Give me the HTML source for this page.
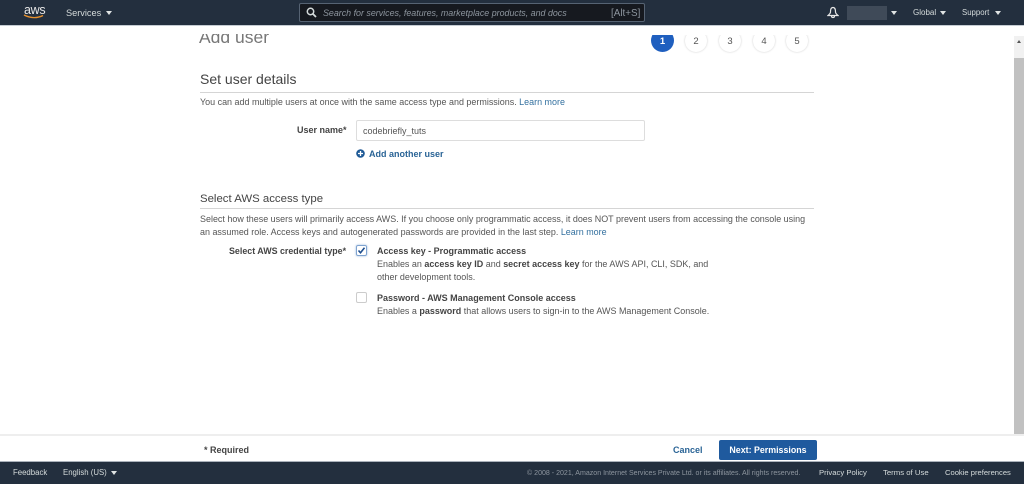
<!DOCTYPE html>
<html><head><meta charset="utf-8"><style>
html,body{margin:0;padding:0;width:1024px;height:484px;overflow:hidden;background:#fff;font-family:"Liberation Sans",sans-serif;color:#444}
#r{position:absolute;left:0;top:0;width:1024px;height:484px;filter:blur(.35px)}
.a{position:absolute;white-space:nowrap;line-height:12px}
.b{font-weight:bold}
.l{color:#33709f}
.w{color:#d5dbdb}
.tri{position:absolute;width:0;height:0;border-left:3px solid transparent;border-right:3px solid transparent;border-top:4.500px solid #e0e4e4}
.step{position:absolute;width:22px;height:22px;border-radius:50%;background:#fff;box-shadow:0 0 2px #ccc;text-align:center;font-size:9.500px;line-height:24px;color:#555}
</style></head><body><div id="r">
<div style="position:absolute;left:0;top:0;width:1024px;height:26px;background:#232f3e;border-bottom:1px solid #c5ccd3;box-sizing:border-box"></div>
<div class="a" style="left:24px;top:4px;font-size:12.500px;color:#e6e6e6;line-height:13px;letter-spacing:-.3px">aws</div>
<svg style="position:absolute;left:23px;top:14px" width="22" height="6"><path d="M1 1Q11 6 20 1.500" fill="none" stroke="#e8912d" stroke-width="1.300"/></svg>
<div class="a w" style="left:66px;top:7px;font-size:9.200px">Services</div>
<div class="tri" style="left:106px;top:10.500px"></div>
<div style="position:absolute;left:299px;top:3px;width:344px;height:17px;background:#16191f;border:1px solid #566373;border-radius:2px"></div>
<svg style="position:absolute;left:306px;top:7px" width="11" height="11" viewBox="0 0 11 11"><circle cx="4.500" cy="4.500" r="3.200" fill="none" stroke="#d5dbdb" stroke-width="1.500"/><path d="M7 7l3 3" stroke="#d5dbdb" stroke-width="1.800"/></svg>
<div class="a" style="left:323px;top:7px;font-size:8.900px;font-style:italic;color:#8d959e">Search for services, features, marketplace products, and docs</div>
<div class="a" style="left:611px;top:8px;font-size:9.900px;color:#8d959e">[Alt+S]</div>
<svg style="position:absolute;left:827px;top:6px" width="12" height="13" viewBox="0 0 12 13"><path d="M6 1.500C3.700 1.500 3.500 4 3.500 6C3.500 7.500 2 8.500 1 9.500H11C10 8.500 8.500 7.500 8.500 6C8.500 4 8.300 1.500 6 1.500ZM4.500 10C4.500 12 7.500 12 7.500 10" fill="none" stroke="#e6e6e6" stroke-width="1.200"/></svg>
<div style="position:absolute;left:847px;top:6px;width:40px;height:14px;background:#3f4a58"></div>
<div class="tri" style="left:891px;top:10.500px"></div>
<div class="a w" style="left:913px;top:7px;font-size:8px">Global</div>
<div class="tri" style="left:940px;top:10.500px"></div>
<div class="a w" style="left:962px;top:7px;font-size:7.800px">Support</div>
<div class="tri" style="left:995px;top:10.500px"></div>

<div style="position:absolute;left:199px;top:34px;width:80px;height:14px;overflow:hidden"><div class="a" style="left:0;top:-7px;font-size:17.500px;line-height:20px;color:#777">Add user</div></div>
<div style="position:absolute;left:640px;top:35px;width:180px;height:22px;overflow:hidden">
<div style="position:absolute;left:11px;top:-6px;width:23px;height:23px;border-radius:50%;background:#1f5fbf;color:#fff;text-align:center;font-size:9.500px;font-weight:bold;line-height:25px">1</div>
<div class="step" style="left:45px;top:-5px">2</div>
<div class="step" style="left:79px;top:-5px">3</div>
<div class="step" style="left:113px;top:-5px">4</div>
<div class="step" style="left:146px;top:-5px">5</div>
</div>

<div class="a" style="left:200px;top:71px;font-size:14px;line-height:16px;color:#444">Set user details</div>
<div style="position:absolute;left:200px;top:92px;width:614px;height:1px;background:#d5d5d5"></div>
<div class="a" style="left:200px;top:96px;font-size:8.960px;color:#555">You can add multiple users at once with the same access type and permissions. <span class="l">Learn more</span></div>
<div class="a b" style="left:297px;top:124px;font-size:9px">User name*</div>
<div style="position:absolute;left:356px;top:120px;width:289px;height:21px;border:1px solid #ddd;box-sizing:border-box;border-radius:2px;background:#fff"></div>
<div class="a" style="left:363px;top:125px;font-size:9px;color:#555">codebriefly_tuts</div>
<svg style="position:absolute;left:356px;top:149px" width="9" height="9" viewBox="0 0 9 9"><circle cx="4.500" cy="4.500" r="4.300" fill="#1f5a96"/><path d="M4.500 2v5M2 4.500h5" stroke="#fff" stroke-width="1.300"/></svg>
<div class="a b" style="left:369px;top:148px;font-size:9px;color:#2a6496">Add another user</div>

<div class="a" style="left:200px;top:191px;font-size:11.400px;line-height:16px">Select AWS access type</div>
<div style="position:absolute;left:200px;top:208px;width:614px;height:1px;background:#d5d5d5"></div>
<div class="a" style="left:200px;top:213px;font-size:8.960px;color:#555">Select how these users will primarily access AWS. If you choose only programmatic access, it does NOT prevent users from accessing the console using</div>
<div class="a" style="left:200px;top:226px;font-size:8.960px;color:#555">an assumed role. Access keys and autogenerated passwords are provided in the last step. <span class="l">Learn more</span></div>
<div class="a b" style="left:229px;top:245px;font-size:8.900px">Select AWS credential type*</div>
<div style="position:absolute;left:356px;top:245px;width:11px;height:11px;border:1px solid #7fa3d0;box-sizing:border-box;border-radius:2px;box-shadow:0 0 2px #9ab8dc"></div>
<svg style="position:absolute;left:356px;top:245px" width="11" height="11" viewBox="0 0 11 11"><path d="M2.500 5.500L4.500 7.800L8.500 2.800" fill="none" stroke="#1f4f8f" stroke-width="1.600"/></svg>
<div class="a b" style="left:377px;top:245px;font-size:8.950px">Access key - Programmatic access</div>
<div class="a" style="left:377px;top:258px;font-size:8.970px;color:#555">Enables an <b style="color:#444">access key ID</b> and <b style="color:#444">secret access key</b> for the AWS API, CLI, SDK, and</div>
<div class="a" style="left:377px;top:271px;font-size:8.970px;color:#555">other development tools.</div>
<div style="position:absolute;left:356px;top:292px;width:11px;height:11px;border:1px solid #ccc;box-sizing:border-box;border-radius:2px"></div>
<div class="a b" style="left:377px;top:292px;font-size:9px">Password - AWS Management Console access</div>
<div class="a" style="left:377px;top:305px;font-size:8.970px;color:#555">Enables a <b style="color:#444">password</b> that allows users to sign-in to the AWS Management Console.</div>

<div style="position:absolute;left:1014px;top:36px;width:10px;height:399px;background:#f1f1f1"></div>
<div style="position:absolute;left:1014px;top:58px;width:10px;height:377px;background:#c1c1c1"></div>
<div style="position:absolute;left:1017px;top:40px;width:0;height:0;border-left:2.500px solid transparent;border-right:2.500px solid transparent;border-bottom:3px solid #555"></div>

<div style="position:absolute;left:0;top:434px;width:1024px;height:2px;background:#eee"></div>
<div class="a b" style="left:204px;top:444px;font-size:9px">* Required</div>
<div class="a b" style="left:673px;top:444px;font-size:9px;color:#2a6496">Cancel</div>
<div style="position:absolute;left:719px;top:440px;width:98px;height:20px;background:#1f5a9e;border-radius:2px;color:#fff;font-weight:bold;font-size:8.850px;line-height:20px;text-align:center">Next: Permissions</div>

<div style="position:absolute;left:0;top:461px;width:1024px;height:23px;background:#232f3e;border-top:1px solid #aab2bb;box-sizing:border-box"></div>
<div class="a w" style="left:13px;top:467px;font-size:7.800px">Feedback</div>
<div class="a w" style="left:63px;top:467px;font-size:7.800px">English (US)</div>
<div class="tri" style="left:110.500px;top:471px"></div>
<div class="a" style="left:527px;top:468px;font-size:7.050px;color:#8d959e">© 2008 - 2021, Amazon Internet Services Private Ltd. or its affiliates. All rights reserved.</div>
<div class="a w" style="left:819px;top:467px;font-size:7.700px">Privacy Policy</div>
<div class="a w" style="left:883px;top:467px;font-size:7.750px">Terms of Use</div>
<div class="a w" style="left:945px;top:467px;font-size:7.600px">Cookie preferences</div>
</div></body></html>
